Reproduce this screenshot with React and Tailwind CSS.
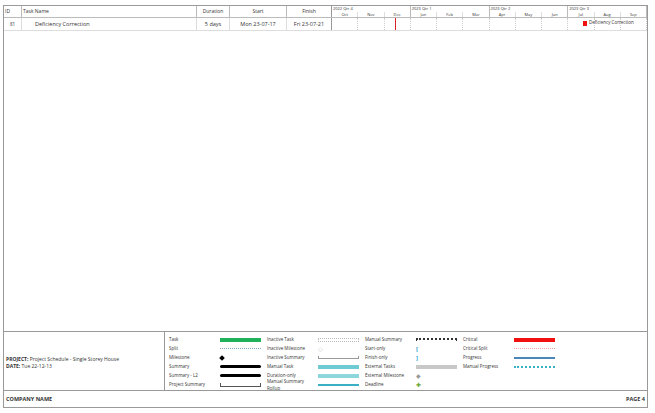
import React from 'react';

const quarters = [
  { name: '2022 Qtr 4', months: ['Oct', 'Nov', 'Dec'] },
  { name: '2023 Qtr 1', months: ['Jan', 'Feb', 'Mar'] },
  { name: '2023 Qtr 2', months: ['Apr', 'May', 'Jun'] },
  { name: '2023 Qtr 3', months: ['Jul', 'Aug', 'Sep'] },
];

const Sw = ({ kind }) => {
  switch (kind) {
    case 'task': return <div className="w-[41px] h-[4px] bg-[#1fb25a]" />;
    case 'split': return <div className="w-[41px] border-t border-dotted border-[#7aa6c8]" />;
    case 'milestone': return <div className="w-[41px] flex"><div className="w-[4px] h-[4px] bg-black rotate-45" /></div>;
    case 'summary': return <div className="w-[41px] h-[3px] bg-black rounded-sm" />;
    case 'psummary': return <div className="w-[41px] h-[4px] border border-t-0 border-[#555]" />;
    case 'itask': return <div className="w-[41px] h-[4px] border border-dotted border-[#bbb]" />;
    case 'imile': return <div className="w-[41px] text-[#bbb] text-[6px] leading-none">◇</div>;
    case 'isum': return <div className="w-[41px] h-[3px] border-x border-b border-[#999]" />;
    case 'mtask': return <div className="w-[41px] h-[4px] bg-[#6fcbd2]" />;
    case 'donly': return <div className="w-[41px] h-[4px] bg-[#8dd6dc]" />;
    case 'msroll': return <div className="w-[41px] h-[2px] bg-[#3ab0c5]" />;
    case 'msum': return <div className="w-[41px] h-[3px] border-x border-t-2 border-dotted border-[#333]" />;
    case 'sonly': return <div className="w-[41px] text-[#2a9fd0] text-[6px] leading-none font-bold">[</div>;
    case 'fonly': return <div className="w-[41px] text-[#2a9fd0] text-[6px] leading-none font-bold">]</div>;
    case 'ext': return <div className="w-[41px] h-[4px] bg-[#c8c8c8]" />;
    case 'extm': return <div className="w-[41px] text-[#999] text-[6px] leading-none">◆</div>;
    case 'dead': return <div className="w-[41px] text-[#6aa832] text-[6px] leading-none">✚</div>;
    case 'crit': return <div className="w-[41px] h-[4px] bg-[#f01010]" />;
    case 'csplit': return <div className="w-[41px] border-t border-dotted border-[#f0a0a0]" />;
    case 'prog': return <div className="w-[41px] h-[2px] bg-[#4a86b8]" />;
    case 'mprog': return <div className="w-[41px] h-[2px] border-t-2 border-dotted border-[#3ab0c5]" />;
    default: return <div className="w-[41px]" />;
  }
};

const legend = [
  [['Task', 'task'], ['Split', 'split'], ['Milestone', 'milestone'], ['Summary', 'summary'], ['Summary - L2', 'summary'], ['Project Summary', 'psummary']],
  [['Inactive Task', 'itask'], ['Inactive Milestone', 'imile'], ['Inactive Summary', 'isum'], ['Manual Task', 'mtask'], ['Duration-only', 'donly'], ['Manual Summary Rollup', 'msroll']],
  [['Manual Summary', 'msum'], ['Start-only', 'sonly'], ['Finish-only', 'fonly'], ['External Tasks', 'ext'], ['External Milestone', 'extm'], ['Deadline', 'dead']],
  [['Critical', 'crit'], ['Critical Split', 'csplit'], ['Progress', 'prog'], ['Manual Progress', 'mprog']],
];

export default function App() {
  return (
    <div className="w-[655px] h-[413px] bg-white text-[#333] pt-[5px] px-[3px]" style={{ fontFamily: '"Open Sans", "Liberation Sans", sans-serif' }}>
      <div className="w-[645px] h-[403px] border border-[#999] flex flex-col">
        <div className="flex-1 flex flex-col">
          <div className="flex h-[12px] border-b border-[#bbb] text-[5px]">
            <div className="w-[18px] border-r border-[#bbb] pl-[1px] leading-[11px]">ID</div>
            <div className="w-[175px] border-r border-[#bbb] pl-[1px] leading-[11px]">Task Name</div>
            <div className="w-[33px] border-r border-[#bbb] text-center leading-[11px]">Duration</div>
            <div className="w-[57px] border-r border-[#bbb] text-center leading-[11px]">Start</div>
            <div className="w-[45px] border-r border-[#999] text-center leading-[11px]">Finish</div>
            <div className="flex-1 flex">
              {quarters.map(q => (
                <div key={q.name} className="flex-1 flex flex-col border-r border-[#bbb]">
                  <div className="h-[6px] leading-[6px] pl-[1px] text-[4px]">{q.name}</div>
                  <div className="flex flex-1">
                    {q.months.map(m => <div key={m} className="flex-1 text-center text-[4px] leading-[5px] border-r border-[#ddd] last:border-r-0">{m}</div>)}
                  </div>
                </div>
              ))}
            </div>
          </div>
          <div className="flex h-[13px] border-b border-[#ddd] text-[5.5px]">
            <div className="w-[18px] border-r border-[#ddd] text-center leading-[12px] text-[4.5px]">81</div>
            <div className="w-[175px] border-r border-[#ddd] pl-[13px] leading-[12px]">Deficiency Correction</div>
            <div className="w-[33px] border-r border-[#ddd] text-center leading-[12px]">5 days</div>
            <div className="w-[57px] border-r border-[#ddd] text-center leading-[12px]">Mon 23-07-17</div>
            <div className="w-[45px] border-r border-[#999] text-center leading-[12px]">Fri 23-07-21</div>
            <div className="flex-1 flex relative">
              {Array.from({ length: 12 }).map((_, i) => <div key={i} className="flex-1 border-r border-dotted border-[#ccc]" />)}
              <div className="absolute left-[63px] top-0 bottom-0 w-px bg-[#e02020]" />
              <div className="absolute left-[251px] top-[3px] w-[4px] h-[5px] bg-[#f01010]" />
              <div className="absolute left-[257px] top-[1px] text-[4.5px] leading-[6px]">Deficiency Correction</div>
            </div>
          </div>
          <div className="flex-1" />
        </div>
        <div className="h-[59px] border-t border-[#999] flex">
          <div className="w-[161px] border-r border-[#999] flex flex-col justify-center text-[5px] leading-[7px] pl-[2px] pt-[4px]">
            <div><b>PROJECT:</b> Project Schedule - Single Storey House</div>
            <div><b>DATE:</b> Tue 22-12-13</div>
          </div>
          <div className="flex pt-[3px] pl-[4px]">
            {legend.map((col, ci) => (
              <div key={ci} className="flex flex-col w-[98px]">
                {col.map(([label, kind]) => (
                  <div key={label} className="flex items-center h-[9px]">
                    <div className="w-[51px] text-[4.5px]">{label}</div>
                    <Sw kind={kind} />
                  </div>
                ))}
              </div>
            ))}
          </div>
        </div>
        <div className="h-[17px] border-t border-[#999] flex justify-between items-center px-[2px] text-[5.5px] font-bold">
          <span>COMPANY NAME</span>
          <span>PAGE 4</span>
        </div>
      </div>
    </div>
  );
}
